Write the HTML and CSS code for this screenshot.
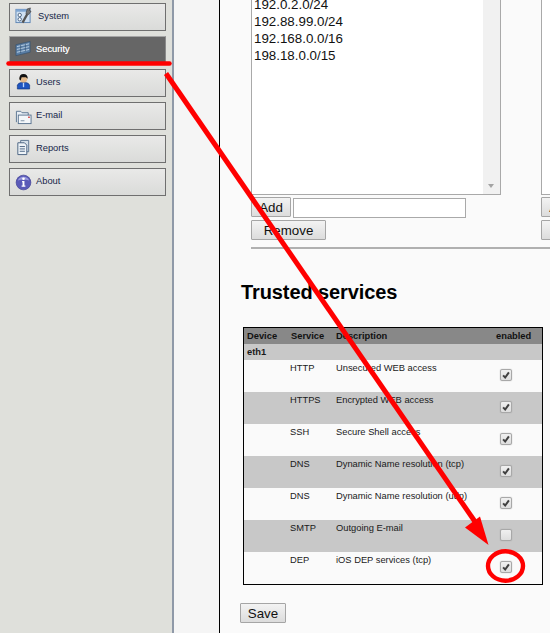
FILE: index.html
```html
<!DOCTYPE html>
<html lang="en">
<head>
<meta charset="utf-8">
<title>Trusted services</title>
<link rel="stylesheet" href="styles.css">
</head>
<body>
<div class="page">
  <nav class="sidebar">
    <a class="nav-item nav-system">
      <svg class="nav-icon" viewBox="0 0 18 18"><rect x="1" y="2.5" width="15" height="14" fill="#cfe0f2" stroke="#5f86b5"/><rect x="1" y="2.5" width="15" height="2.5" fill="#7fa6d2"/><circle cx="5" cy="8.5" r="1.8" fill="#fff" stroke="#47617f"/><circle cx="5" cy="13" r="1.8" fill="#fff" stroke="#47617f"/><path d="M8 16.5 L13 7.5" stroke="#555" stroke-width="2.4"/><path d="M11.5 7 L13 2 L16.5 1 L15 3.5 L17 4.5 L14.5 8 Z" fill="#777" stroke="#333" stroke-width=".6"/></svg>
      <span>System</span>
    </a>
    <a class="nav-item nav-active">
      <svg class="nav-icon" viewBox="0 0 18 18"><path d="M1 5 L16 1.5 V13 L1 16.5 Z" fill="#5b7fa6" stroke="#34526f" stroke-width=".7"/><path d="M2 7 L15 4 M2 10 L15 7 M2 13 L15 10" stroke="#bcd2e6" stroke-width="1"/><path d="M6 5 V14 M11 4 V12" stroke="#34526f" stroke-width=".7"/></svg>
      <span>Security</span>
    </a>
    <a class="nav-item">
      <svg class="nav-icon" viewBox="0 0 18 18"><path d="M2.5 17 V13 Q3 10.5 7 10 H11 Q15 10.5 15.5 13 V17 Z" fill="#1f55c0" stroke="#0d2c70" stroke-width=".6"/><path d="M9 10.5 V15" stroke="#bcd6ff" stroke-width="1.4"/><circle cx="9" cy="6" r="4" fill="#e3b98b"/><path d="M4.5 6.5 Q4.5 1 9 1 Q13.5 1 13.5 6 L11.5 4.5 H7 L6 8 Z" fill="#111"/></svg>
      <span>Users</span>
    </a>
    <a class="nav-item">
      <svg class="nav-icon nav-icon-wide" viewBox="0 0 18 18"><path d="M1.5 15 V3.5 H6 L7.5 5 H14 V8" fill="#e8eef5" stroke="#5a7490"/><rect x="3.5" y="7.5" width="13.5" height="9" fill="#f4f7fa" stroke="#5a7490"/><rect x="14" y="9" width="1.6" height="1.6" fill="#d03030"/><path d="M6 13.5 H10" stroke="#7a8ea3"/></svg>
      <span>E-mail</span>
    </a>
    <a class="nav-item">
      <svg class="nav-icon" viewBox="0 0 18 18"><path d="M6 1.5 H14.5 V13.5 H6 Z" fill="#d4dfea" stroke="#5a7490"/><path d="M3 4 H10 L12.5 6.5 V16.5 H3 Z" fill="#eef3f8" stroke="#47617f"/><path d="M5 8 H10.5 M5 10.5 H10.5 M5 13 H10.5" stroke="#47617f"/></svg>
      <span>Reports</span>
    </a>
    <a class="nav-item">
      <svg class="nav-icon nav-icon-about" viewBox="0 0 18 18"><circle cx="9" cy="9" r="7.8" fill="#5a5ab8" stroke="#3c3c92" stroke-width=".7"/><path d="M3 7 A6.5 6.5 0 0 1 15 7 Q9 4.5 3 7 Z" fill="#9a9ade"/><circle cx="9" cy="5" r="1.4" fill="#fff"/><path d="M7.5 7.5 H10 V12.3 H11 V13.5 H7 V12.3 H8 V8.7 H7.5 Z" fill="#fff"/></svg>
      <span>About</span>
    </a>
  </nav>
  <div class="gutter"></div>
  <main class="content">
    <div class="lists">
      <div class="list-col">
        <div class="listbox">
          <div class="list-items">
            <div>192.0.2.0/24</div>
            <div>192.88.99.0/24</div>
            <div>192.168.0.0/16</div>
            <div>198.18.0.0/15</div>
          </div>
          <div class="scrollbar"><i class="scroll-arrow"></i></div>
        </div>
        <div class="add-row">
          <button class="btn btn-add">Add</button>
          <input class="text-input" type="text">
        </div>
        <button class="btn btn-remove">Remove</button>
      </div>
      <div class="list-col">
        <div class="listbox"></div>
        <div class="add-row">
          <button class="btn btn-add">Add</button>
          <input class="text-input" type="text">
        </div>
        <button class="btn btn-remove">Remove</button>
      </div>
    </div>
    <hr class="rule">
    <h2 class="title">Trusted services</h2>
    <table class="services">
      <colgroup><col class="c1"><col class="c2"><col class="c3"><col class="c4"></colgroup>
      <thead>
        <tr><th>Device</th><th>Service</th><th>Description</th><th>enabled</th></tr>
      </thead>
      <tbody>
        <tr class="device-row"><td colspan="4">eth1</td></tr>
        <tr><td></td><td>HTTP</td><td>Unsecured WEB access</td><td class="cell-check"><span class="check"><svg viewBox="0 0 12 12"><path d="M2.5 6.5 L5 9 L9.5 2.8" /></svg></span></td></tr>
        <tr class="alt"><td></td><td>HTTPS</td><td>Encrypted WEB access</td><td class="cell-check"><span class="check"><svg viewBox="0 0 12 12"><path d="M2.5 6.5 L5 9 L9.5 2.8" /></svg></span></td></tr>
        <tr><td></td><td>SSH</td><td>Secure Shell access</td><td class="cell-check"><span class="check"><svg viewBox="0 0 12 12"><path d="M2.5 6.5 L5 9 L9.5 2.8" /></svg></span></td></tr>
        <tr class="alt"><td></td><td>DNS</td><td>Dynamic Name resolution (tcp)</td><td class="cell-check"><span class="check"><svg viewBox="0 0 12 12"><path d="M2.5 6.5 L5 9 L9.5 2.8" /></svg></span></td></tr>
        <tr><td></td><td>DNS</td><td>Dynamic Name resolution (udp)</td><td class="cell-check"><span class="check"><svg viewBox="0 0 12 12"><path d="M2.5 6.5 L5 9 L9.5 2.8" /></svg></span></td></tr>
        <tr class="alt"><td></td><td>SMTP</td><td>Outgoing E-mail</td><td class="cell-check"><span class="check"></span></td></tr>
        <tr><td></td><td>DEP</td><td>iOS DEP services (tcp)</td><td class="cell-check"><span class="check"><svg viewBox="0 0 12 12"><path d="M2.5 6.5 L5 9 L9.5 2.8" /></svg></span></td></tr>
      </tbody>
    </table>
    <button class="btn btn-save">Save</button>
  </main>
  <svg class="annotation" viewBox="0 0 550 633" aria-hidden="true">
    <path d="M8.5 63.5 H169.5" stroke="#f00" stroke-width="4.5" stroke-linecap="round" fill="none"/>
    <path d="M166 73.5 L478 526" stroke="#f00" stroke-width="5" fill="none"/>
    <path d="M488.5 545 L480 516.5 L465 527.5 Z" fill="#f00"/>
    <ellipse cx="505.5" cy="566" rx="17.5" ry="14.7" stroke="#f00" stroke-width="4.4" fill="none"/>
  </svg>
</div>
</body>
</html>
```
FILE: styles.css
```css
html, body {
  margin: 0;
  padding: 0;
  height: 633px;
  overflow: hidden;
  background: #fafafa;
}

.page {
  position: relative;
  display: flex;
  width: 550px;
  height: 633px;
  overflow: hidden;
  font-family: "Liberation Sans", Arial, sans-serif;
  color: #000;
}

.sidebar {
  box-sizing: border-box;
  flex: 0 0 172px;
  display: flex;
  flex-direction: column;
  gap: 5px;
  padding: 3px 6px 0 9px;
  background: #dfe0db;
}

.nav-item {
  box-sizing: border-box;
  height: 28px;
  display: flex;
  align-items: center;
  gap: 4px;
  padding: 0 0 3px 5px;
  border: 1px solid #6f6f6f;
  background: linear-gradient(#e9e9e8, #dadbd9);
  font-size: 9.33px;
  color: #17264a;
}

.nav-system { gap: 6px; }

.nav-icon {
  flex: none;
  width: 17px;
  height: 17px;
}

.nav-icon-wide { margin-top: 4px; }
.nav-icon-about { margin-top: 3px; }

.nav-active {
  background: #666;
  border-color: #a5a5a5 #8a8a8a #666 #a5a5a5;
  color: #f3f3f3;
  text-shadow: 0 0 .4px #fff;
}

.gutter {
  box-sizing: border-box;
  flex: 0 0 48px;
  background: #f5f5f5;
  border-left: 2px solid #8f99a8;
  border-right: 1px solid #000;
}

.content {
  flex: 0 0 330px;
  box-sizing: border-box;
  padding-left: 20px;
  background: #fafafa;
  overflow: hidden;
}

.lists {
  display: flex;
  gap: 40px;
  width: 600px;
  margin-left: 11px;
}

.list-col {
  width: 250px;
  flex: none;
}

.listbox {
  box-sizing: border-box;
  display: flex;
  height: 195px;
  background: #fff;
  border: 1px solid #a9a9a9;
  border-top: 0;
  overflow: hidden;
}

.list-items {
  flex: 1;
  align-self: flex-end;
  box-sizing: border-box;
  height: 194px;
  display: flex;
  flex-direction: column;
  justify-content: flex-end;
  padding: 0 0 130px 2px;
  font-size: 13.33px;
  line-height: 17px;
  color: #111;
}

.scrollbar {
  position: relative;
  flex: 0 0 17px;
  background: #f1f1f1;
}

.scroll-arrow {
  position: absolute;
  left: 5px;
  bottom: 6px;
  border-left: 3.5px solid transparent;
  border-right: 3.5px solid transparent;
  border-top: 4px solid #a3a3a3;
}

.add-row {
  display: flex;
  align-items: flex-start;
  gap: 2px;
  margin-top: 2px;
}

.btn {
  box-sizing: border-box;
  height: 20px;
  padding: 0;
  font-family: "Liberation Sans", Arial, sans-serif;
  font-size: 13.33px;
  line-height: 17px;
  color: #111;
  background: linear-gradient(#f3f3f3, #dcdcdc);
  border: 1px solid #a5a5a5;
  border-radius: 1px;
}

.btn-add { width: 40px; }

.btn-remove {
  display: block;
  width: 75px;
  margin-top: 2px;
}

.text-input {
  box-sizing: border-box;
  width: 173px;
  height: 20px;
  margin: 1px 0 0;
  padding: 0;
  background: #fff;
  border: 1px solid #a9a9a9;
  border-radius: 0;
}

.rule {
  height: 2px;
  width: 320px;
  margin: 7px 0 0 11px;
  border: 0;
  background: #b0b0b0;
}

.title {
  margin: 32px 0 0 1px;
  font-size: 20px;
  line-height: 23px;
  font-weight: 700;
  letter-spacing: -.1px;
  color: #000;
}

.services {
  box-sizing: border-box;
  table-layout: fixed;
  width: 300px;
  margin: 23px 0 0 3px;
  border: 1px solid #000;
  border-spacing: 0;
  border-collapse: separate;
  font-size: 9.33px;
  color: #1a1a1a;
}

.c1 { width: 44px; }
.c2 { width: 45px; }
.c3 { width: 160px; }
.c4 { width: 49px; }

.services th {
  height: 16px;
  padding: 0 0 0 3px;
  text-align: left;
  font-weight: 700;
  line-height: 16px;
  background: #888;
  color: #111;
}

.services td {
  height: 32px;
  padding: 2px 0 0 3px;
  vertical-align: top;
  line-height: 13px;
  box-sizing: border-box;
}

.services tbody td:nth-child(2) { padding-left: 2px; }

.services .device-row td {
  height: 16px;
  padding: 0 0 0 3px;
  line-height: 16px;
  font-weight: 700;
  background: #c8c8c8;
}

.services .alt td { background: #c8c8c8; }

.services .cell-check {
  padding: 9px 0 0 7px;
}

.check {
  box-sizing: border-box;
  display: block;
  width: 12px;
  height: 12px;
  background: linear-gradient(#f0f0f0, #dedede);
  border: 1px solid #a8a8a8;
  border-radius: 2px;
  box-shadow: 0 0 1px #999;
}

.check svg {
  display: block;
  width: 10px;
  height: 10px;
  fill: none;
  stroke: #404040;
  stroke-width: 2.4;
}

.btn-save {
  display: block;
  width: 46px;
  margin: 18px 0 0 0;
}

.annotation {
  position: absolute;
  left: 0;
  top: 0;
  width: 550px;
  height: 633px;
  pointer-events: none;
}
```
